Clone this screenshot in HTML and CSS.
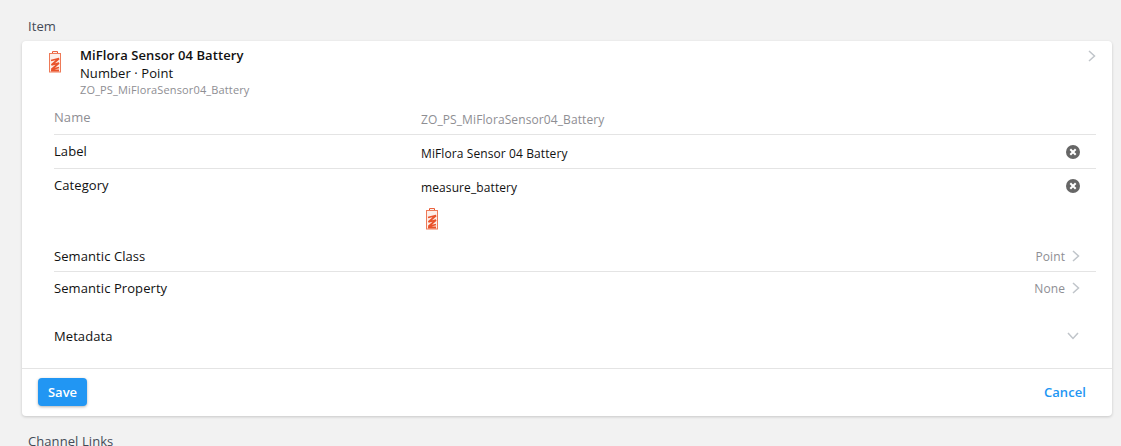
FILE: index.html
```html
<!DOCTYPE html>
<html lang="en">

<head>
  <meta charset="UTF-8" />
  <meta name="viewport" content="width=device-width, initial-scale=1.0" />
  <title>Item</title>
  <link rel="stylesheet" href="styles.css">
</head>

<body>
  <svg class="defs" width="0" height="0">
    <symbol id="battery" viewBox="0 0 14 22">
      <path d="M4.500 2.500V.6h5v1.900" fill="none" stroke="#e9532b" stroke-width="1" />
      <rect x="1.500" y="2.500" width="11" height="18.500" fill="#fdeee8" stroke="#ee7a58" stroke-width="1" />
      <path d="M3 9.500L11 7.500 3.500 14 11 12 3.500 18.500 11 16.500M3 19.500h8" fill="none" stroke="#e9532b" stroke-width="1.800" />
    </symbol>
    <symbol id="clear" viewBox="0 0 14 14">
      <circle cx="7" cy="7" r="7" fill="#666" />
      <path d="M4.300 4.300l5.400 5.400M9.700 4.300l-5.400 5.400" stroke="#fff" stroke-width="2" />
    </symbol>
    <symbol id="chevron" viewBox="0 0 8 12">
      <path d="M1 1l5.500 5L1 11" fill="none" stroke="#c0c5ca" stroke-width="1.500" />
    </symbol>
  </svg>

  <h2 class="block-title">Item</h2>

  <div class="card">
    <div class="item-head">
      <svg class="item-icon"><use href="#battery" /></svg>
      <div class="item-text">
        <div class="item-title">MiFlora Sensor 04 Battery</div>
        <div class="item-sub">Number · Point</div>
        <div class="item-footer">ZO_PS_MiFloraSensor04_Battery</div>
      </div>
      <svg class="chevron head-chevron"><use href="#chevron" /></svg>
    </div>

    <div class="form">
      <div class="row row-name">
        <span class="row-label muted">Name</span>
        <span class="row-value muted">ZO_PS_MiFloraSensor04_Battery</span>
      </div>
      <div class="row row-label-field">
        <span class="row-label">Label</span>
        <span class="row-value">MiFlora Sensor 04 Battery</span>
        <svg class="clear"><use href="#clear" /></svg>
      </div>
      <div class="row row-category">
        <span class="row-label">Category</span>
        <div class="row-value">
          <div>measure_battery</div>
          <svg class="category-icon"><use href="#battery" /></svg>
        </div>
        <svg class="clear"><use href="#clear" /></svg>
      </div>
      <div class="row row-link">
        <span class="row-label">Semantic Class</span>
        <span class="link-after">Point</span>
        <svg class="chevron"><use href="#chevron" /></svg>
      </div>
      <div class="row row-link row-last">
        <span class="row-label">Semantic Property</span>
        <span class="link-after">None</span>
        <svg class="chevron"><use href="#chevron" /></svg>
      </div>
      <div class="metadata">
        <span class="row-label">Metadata</span>
        <svg class="chevron chevron-down"><use href="#chevron" /></svg>
      </div>
    </div>

    <div class="card-footer">
      <button class="save-btn">Save</button>
      <a class="cancel-link">Cancel</a>
    </div>
  </div>

  <h2 class="block-title next-title">Channel Links</h2>
</body>

</html>
```

FILE: styles.css
```css
* {
  margin: 0;
  padding: 0;
  box-sizing: border-box;
  font-family: 'Open Sans', 'Liberation Sans', sans-serif;
}

html,
body {
  height: 446px;
  overflow: hidden;
}

body {
  background: #f2f2f2;
  color: #111;
  font-size: 13px;
  letter-spacing: 0.08px;
}

.defs {
  position: absolute;
}

.block-title {
  font-size: 13px;
  font-weight: 400;
  color: #444b57;
  margin-left: 28px;
  height: 19px;
  line-height: 19px;
  margin-top: 17px;
}

.next-title {
  margin-top: 16px;
}

.card {
  margin: 5px 9px 0 22px;
  height: 375px;
  background: white;
  border-radius: 4px;
  box-shadow: 0 1px 3px rgba(0, 0, 0, 0.18);
  display: flex;
  flex-direction: column;
}

.item-head {
  display: flex;
  height: 59px;
  padding: 6px 16px 0 26px;
}

.item-icon {
  width: 14px;
  height: 22px;
  margin-top: 4px;
  flex-shrink: 0;
}

.item-text {
  margin-left: 18px;
  flex: 1;
}

.item-title {
  font-weight: 600;
  line-height: 17px;
}

.item-sub {
  line-height: 18px;
}

.item-footer {
  font-size: 11px;
  letter-spacing: 0.14px;
  color: #8e8e93;
  line-height: 15px;
}

.chevron {
  width: 8px;
  height: 12px;
  flex-shrink: 0;
}

.head-chevron {
  margin-top: 3px;
}

.form {
  flex: 1;
  margin-left: 32px;
  padding-right: 16px;
}

.row {
  display: flex;
  align-items: center;
  border-bottom: 1px solid #e4e4e4;
}

.row-name {
  height: 35px;
  padding-bottom: 1px;
}

.row-label-field {
  height: 34px;
  padding-bottom: 2px;
}

.row-label-field .clear {
  margin-top: 2px;
}

.row-category {
  height: 71px;
  align-items: flex-start;
  padding-top: 7px;
  border-bottom: none;
}

.row-category .clear {
  margin-top: 3px;
}

.row-label {
  width: 367px;
  flex-shrink: 0;
}

.row-value {
  flex: 1;
  font-size: 12px;
  letter-spacing: 0.1px;
  margin-top: 6px;
}

.row-category .row-value {
  margin-top: 3px;
}

.muted {
  color: #8e8e93;
}

.clear {
  width: 14px;
  height: 14px;
  margin-right: 16px;
  flex-shrink: 0;
}

.category-icon {
  display: block;
  width: 14px;
  height: 22px;
  margin: 12px 0 0 4px;
}

.row-link {
  height: 32px;
}

.row-link .row-label {
  flex: 1;
}

.link-after {
  color: #8e8e93;
  font-size: 12px;
  margin: 1px 7px 0 0;
}

.row-link .chevron {
  margin-right: 16px;
}

.row-last {
  border-bottom: none;
}

.metadata {
  display: flex;
  justify-content: space-between;
  align-items: center;
  height: 32px;
  margin-top: 16px;
  padding-right: 19px;
}

.chevron-down {
  transform: rotate(90deg);
}

.card-footer {
  height: 48px;
  border-top: 1px solid #e4e4e4;
  display: flex;
  justify-content: space-between;
  align-items: center;
  padding: 0 26px 2px 16px;
}

.save-btn {
  width: 49px;
  height: 28px;
  background: #2196f3;
  color: white;
  border: none;
  border-radius: 4px;
  font-size: 13px;
  font-weight: 600;
  box-shadow: 0 1px 3px rgba(0, 0, 0, 0.3);
}

.cancel-link {
  color: #2196f3;
  font-weight: 600;
}
```
